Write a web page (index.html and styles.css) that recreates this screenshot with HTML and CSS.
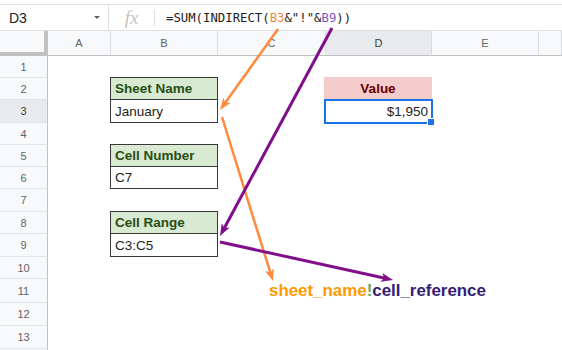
FILE: index.html
```html
<!DOCTYPE html>
<html lang="en">
<head>
    <meta charset="UTF-8">
    <title>INDIRECT</title>
    <link rel="stylesheet" href="styles.css">
</head>
<body>
    <div class="app">
        <div class="formula-bar">
            <div class="name-box"><span>D3</span><span class="caret"></span></div>
            <div class="fx">fx</div>
            <div class="formula">=SUM(INDIRECT(<span class="ref-a">B3</span>&amp;"!"&amp;<span class="ref-b">B9</span>))</div>
        </div>

        <div class="col-heads">
            <div class="corner"></div>
            <div class="col-head col-a">A</div>
            <div class="col-head col-b">B</div>
            <div class="col-head col-c">C</div>
            <div class="col-head col-d active">D</div>
            <div class="col-head col-e">E</div>
            <div class="col-head col-f"></div>
        </div>

        <div class="grid">
            <div class="num">1</div>
            <div class="num">2</div>
            <div class="num active">3</div>
            <div class="num">4</div>
            <div class="num">5</div>
            <div class="num">6</div>
            <div class="num">7</div>
            <div class="num">8</div>
            <div class="num">9</div>
            <div class="num">10</div>
            <div class="num">11</div>
            <div class="num">12</div>
            <div class="num">13</div>
            <div class="num"></div>

            <div class="box head sheet-head">Sheet Name</div>
            <div class="box sheet-val">January</div>
            <div class="box head number-head">Cell Number</div>
            <div class="box number-val">C7</div>
            <div class="box head range-head">Cell Range</div>
            <div class="box range-val">C3:C5</div>

            <div class="value-head">Value</div>
            <div class="value">$1,950<span class="handle"></span></div>

            <div class="note"><span class="n-sheet">sheet_name</span><span class="n-bang">!</span><span class="n-cell">cell_reference</span></div>
        </div>

        <svg class="arrows" width="562" height="350" viewBox="0 0 562 350">
            <defs>
                <marker id="tip-orange" markerUnits="userSpaceOnUse" markerWidth="12" markerHeight="10" refX="4" refY="5" orient="auto">
                    <path d="M0,0.5 L12,5 L0,9.5 L3,5 z" fill="#ff8a3d"/>
                </marker>
                <marker id="tip-purple" markerUnits="userSpaceOnUse" markerWidth="12" markerHeight="10" refX="4" refY="5" orient="auto">
                    <path d="M0,0.5 L12,5 L0,9.5 L3,5 z" fill="#800d8a"/>
                </marker>
            </defs>
            <line x1="278" y1="29" x2="224.7" y2="103.5" stroke="#ff8a3d" stroke-width="2.5" marker-end="url(#tip-orange)"/>
            <line x1="222" y1="117" x2="270.6" y2="273.4" stroke="#ff8a3d" stroke-width="2.5" marker-end="url(#tip-orange)"/>
            <line x1="332" y1="28" x2="223.8" y2="229" stroke="#800d8a" stroke-width="3" marker-end="url(#tip-purple)"/>
            <line x1="220" y1="242" x2="385.2" y2="278.3" stroke="#800d8a" stroke-width="3" marker-end="url(#tip-purple)"/>
        </svg>
    </div>
</body>
</html>
```

FILE: styles.css
```css
body {
    margin: 0;
    font-family: "Liberation Sans", Arial, sans-serif;
    background: #fff;
}

.app {
    position: relative;
    width: 562px;
    height: 350px;
    overflow: hidden;
}

/* formula bar */
.formula-bar {
    margin-top: 4px;
    height: 27px;
    box-sizing: border-box;
    border-top: 1px solid #e0e0e0;
    border-bottom: 1px solid #e0e0e0;
    display: flex;
    align-items: center;
}

.name-box {
    width: 109px;
    height: 100%;
    box-sizing: border-box;
    border-right: 1px solid #e0e0e0;
    padding-left: 9px;
    display: flex;
    align-items: center;
    font-size: 14px;
    color: #202124;
}

.caret {
    margin-left: auto;
    margin-right: 8px;
    border-left: 3px solid transparent;
    border-right: 3px solid transparent;
    border-top: 3px solid #5f6368;
}

.fx {
    width: 46px;
    height: 16px;
    box-sizing: border-box;
    border-right: 1px solid #e0e0e0;
    display: flex;
    align-items: center;
    justify-content: center;
    font-family: "Liberation Serif", serif;
    font-style: italic;
    font-size: 19px;
    color: #c4c4c4;
}

.formula {
    padding-left: 11px;
    font-family: "DejaVu Sans Mono", monospace;
    font-size: 12.3px;
    color: #202124;
}

.ref-a {
    color: #f0883e;
}

.ref-b {
    color: #7e57c2;
}

/* headers */
.col-heads {
    display: flex;
    height: 25px;
}

.corner {
    width: 48px;
    box-sizing: border-box;
    background: #f8f9fa;
    border-right: 4px solid #c0c0c0;
    border-bottom: 4px solid #c0c0c0;
}

.col-head {
    box-sizing: border-box;
    background: #f8f9fa;
    border-right: 1px solid #dadce0;
    border-bottom: 1px solid #c0c0c0;
    display: flex;
    align-items: center;
    justify-content: center;
    font-size: 11px;
    color: #5f6368;
}

.col-a { width: 63px; }
.col-b { width: 107px; }
.col-c { width: 108px; }
.col-d { width: 106px; }
.col-e { width: 107px; }
.col-f { flex: 1; }

.col-head.active,
.num.active {
    background: #e8eaed;
    color: #3c4043;
}

/* cells */
.grid {
    display: grid;
    grid-template-columns: 48px 63px 107px 108px 106px 107px 1fr;
    grid-template-rows: 22px 22px 23px 22px 22px 22px 23px 22px 23px 22px 24px 23px 23px 22px;
    grid-template-areas:
        ". . . . . . ."
        ". . sh . vh . ."
        ". . sv . val . ."
        ". . . . . . ."
        ". . nh . . . ."
        ". . nv . . . ."
        ". . . . . . ."
        ". . rh . . . ."
        ". . rv . . . ."
        ". . . . . . ."
        ". . . note note note note"
        ". . . . . . ."
        ". . . . . . ."
        ". . . . . . .";
}

.num {
    grid-column: 1;
    box-sizing: border-box;
    background: #f8f9fa;
    border-right: 1px solid #c0c0c0;
    border-bottom: 1px solid #e2e3e5;
    display: flex;
    align-items: center;
    justify-content: center;
    font-size: 11px;
    color: #5f6368;
}

.box {
    margin: -1px 0 0 -1px;
    padding: 0 4px;
    border: 1px solid #383838;
    display: flex;
    align-items: center;
    font-size: 13.5px;
    color: #222;
}

.box.head {
    background: #d9ead3;
    color: #274e13;
    font-weight: bold;
}

.sheet-head { grid-area: sh; }
.sheet-val { grid-area: sv; }
.number-head { grid-area: nh; }
.number-val { grid-area: nv; }
.range-head { grid-area: rh; }
.range-val { grid-area: rv; }

.value-head {
    grid-area: vh;
    margin: -1px 0 0 -2px;
    background: #f4cccc;
    color: #660000;
    font-weight: bold;
    font-size: 13.5px;
    display: flex;
    align-items: center;
    justify-content: center;
}

.value {
    grid-area: val;
    position: relative;
    margin: -1px -1px -1px -2px;
    padding-right: 3px;
    border: 2px solid #1a73e8;
    display: flex;
    align-items: center;
    justify-content: flex-end;
    font-size: 13.5px;
    color: #222;
}

.handle {
    position: absolute;
    right: -4px;
    bottom: -4px;
    width: 6px;
    height: 6px;
    background: #1a73e8;
    border: 1px solid #fff;
}

.note {
    grid-area: note;
    padding-left: 51px;
    display: flex;
    align-items: center;
    white-space: nowrap;
    font-size: 16.9px;
    font-weight: bold;
}

.n-sheet { color: #ff9900; }
.n-bang { color: #6aa84f; }
.n-cell { color: #351c75; }

.arrows {
    position: absolute;
    left: 0;
    top: 0;
    pointer-events: none;
}
```
